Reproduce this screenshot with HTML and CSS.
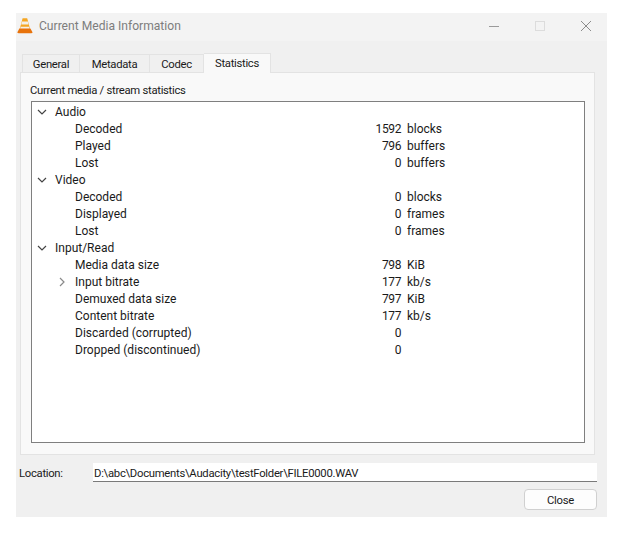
FILE: index.html
```html
<!DOCTYPE html>
<html lang="en">
<head>
<meta charset="UTF-8">
<meta name="viewport" content="width=device-width, initial-scale=1.0">
<title>Current Media Information</title>
<link rel="stylesheet" href="styles.css">
</head>
<body>
<div class="window">
    <div class="titlebar">
        <svg class="vlc-icon" width="16" height="17" viewBox="0 0 16 17">
            <path d="M5.6 1.2h4.6l3 11.3H2.6z" fill="#f5a623"/>
            <path d="M5 4.6h5.8l.8 3H4.200z" fill="#f4f0e8"/>
            <path d="M3.700 9.800h8.400l.6 2.200H3.100z" fill="#f6f0e6"/>
            <path d="M2.400 11.600h11l2 3.400c.2.800-.2 1.200-1 1.200H1.500c-.8 0-1.200-.4-1-1.200z" fill="#e8730c"/>
        </svg>
        <span class="title">Current Media Information</span>
        <div class="window-buttons">
            <svg width="12" height="12" viewBox="0 0 12 12"><path d="M1 6.500h10" stroke="#9a9a9a" fill="none"/></svg>
            <svg width="12" height="12" viewBox="0 0 12 12"><rect x="1.500" y="1.500" width="9" height="9" stroke="#dcdcdc" fill="none"/></svg>
            <svg width="12" height="12" viewBox="0 0 12 12"><path d="M1 1l10 10M11 1L1 11" stroke="#8c8c8c" fill="none"/></svg>
        </div>
    </div>

    <div class="tabs">
        <div class="tab">General</div>
        <div class="tab">Metadata</div>
        <div class="tab">Codec</div>
        <div class="tab active">Statistics</div>
    </div>

    <div class="panel">
        <div class="panel-label">Current media / stream statistics</div>
        <div class="tree">
            <div class="row"><svg class="arrow" viewBox="0 0 10 10"><path d="M1 3l4 4 4-4" /></svg><span class="group">Audio</span></div>
            <div class="row"><span class="name">Decoded</span><span class="value">1592</span><span class="unit">blocks</span></div>
            <div class="row"><span class="name">Played</span><span class="value">796</span><span class="unit">buffers</span></div>
            <div class="row"><span class="name">Lost</span><span class="value">0</span><span class="unit">buffers</span></div>

            <div class="row"><svg class="arrow" viewBox="0 0 10 10"><path d="M1 3l4 4 4-4" /></svg><span class="group">Video</span></div>
            <div class="row"><span class="name">Decoded</span><span class="value">0</span><span class="unit">blocks</span></div>
            <div class="row"><span class="name">Displayed</span><span class="value">0</span><span class="unit">frames</span></div>
            <div class="row"><span class="name">Lost</span><span class="value">0</span><span class="unit">frames</span></div>

            <div class="row"><svg class="arrow" viewBox="0 0 10 10"><path d="M1 3l4 4 4-4" /></svg><span class="group">Input/Read</span></div>
            <div class="row"><span class="name">Media data size</span><span class="value">798</span><span class="unit">KiB</span></div>
            <div class="row"><svg class="arrow sub" viewBox="0 0 10 10"><path d="M3 1l4 4-4 4" /></svg><span class="name">Input bitrate</span><span class="value">177</span><span class="unit">kb/s</span></div>
            <div class="row"><span class="name">Demuxed data size</span><span class="value">797</span><span class="unit">KiB</span></div>
            <div class="row"><span class="name">Content bitrate</span><span class="value">177</span><span class="unit">kb/s</span></div>
            <div class="row"><span class="name">Discarded (corrupted)</span><span class="value">0</span><span class="unit"></span></div>
            <div class="row"><span class="name">Dropped (discontinued)</span><span class="value">0</span><span class="unit"></span></div>
        </div>
    </div>

    <div class="location">
        <label for="path">Location:</label>
        <input type="text" id="path" value="D:\abc\Documents\Audacity\testFolder\FILE0000.WAV" readonly>
    </div>

    <div class="footer">
        <button>Close</button>
    </div>
</div>
</body>
</html>
```

FILE: styles.css
```css
body {
    font-family: Roboto, "Open Sans", sans-serif;
    font-size: 11.300px;
    letter-spacing: -0.3px;
    color: #1a1a1a;
    margin: 0;
    background-color: #fff;
}

.window {
    width: 591px;
    height: 504px;
    margin: 13px 0 0 16px;
    background-color: #f0f0f0;
    display: flex;
    flex-direction: column;
}

.titlebar {
    height: 28px;
    box-sizing: border-box;
    padding-bottom: 3px;
    background-color: #f3f3f3;
    display: flex;
    align-items: center;
    padding-left: 1px;
}

.vlc-icon {
    margin-right: 6px;
}

.title {
    color: #7d7d7d;
    font-size: 12.100px;
    letter-spacing: 0;
}

.window-buttons {
    margin-left: auto;
    display: flex;
    gap: 34px;
    margin-right: 15px;
}

.tabs {
    display: flex;
    margin: 12px 0 0 6px;
    height: 19px;
    align-items: flex-end;
}

.tab {
    height: 18px;
    line-height: 20px;
    text-align: center;
    background-color: #f0f0f0;
    border: 1px solid #e3e3e3;
    border-left: none;
    border-bottom: none;
    box-sizing: border-box;
}

.tab:nth-child(1) {
    width: 58px;
    border-left: 1px solid #e3e3e3;
}

.tab:nth-child(2) {
    width: 70px;
}

.tab:nth-child(3) {
    width: 54px;
}

.tab.active {
    width: 67px;
    height: 20px;
    line-height: 20px;
    background-color: #f9f9f9;
    margin-bottom: -1px;
    position: relative;
}

.panel {
    margin: 0 12px 0 4px;
    height: 383px;
    background-color: #f9f9f9;
    border: 1px solid #e3e3e3;
    box-sizing: border-box;
    padding: 8px 9px 11px 9px;
    display: flex;
    flex-direction: column;
}

.panel-label {
    height: 20px;
    line-height: 20px;
}

.tree {
    flex: 1;
    margin-left: 1px;
    background-color: #fff;
    border: 1px solid #7f7f7f;
    padding: 2px 0 0 0;
    font-size: 12px;
    letter-spacing: 0;
}

.row {
    height: 17px;
    line-height: 17px;
    display: flex;
    align-items: center;
    padding-left: 43px;
    position: relative;
}

.row:has(.group) {
    padding-left: 23px;
}

.arrow {
    position: absolute;
    left: 5px;
    top: 3px;
    width: 10px;
    height: 10px;
    fill: none;
    stroke: #444;
    stroke-width: 1.2;
}

.arrow.sub {
    left: 25px;
    stroke: #8a8a8a;
}

.name {
    width: 296px;
}

.value {
    width: 30px;
    text-align: right;
    letter-spacing: -0.4px;
}

.unit {
    margin-left: 6px;
}

.location {
    display: flex;
    align-items: center;
    margin: 8px 10px 0 3px;
    height: 19px;
}

.location label {
    width: 74px;
    padding-top: 2px;
}

.location input {
    flex: 1;
    height: 19px;
    box-sizing: border-box;
    border: none;
    border-bottom: 1px solid #7a7a7a;
    background-color: #fff;
    font-family: inherit;
    font-size: 11.300px;
    letter-spacing: -0.28px;
    color: #1a1a1a;
    padding: 2px 0 0 1px;
    outline: none;
}

.footer {
    display: flex;
    justify-content: flex-end;
    margin: 7px 10px 0 0;
}

button {
    width: 73px;
    height: 21px;
    padding: 1px 0 0;
    background-color: #fdfdfd;
    border: 1px solid #d0d0d0;
    border-radius: 4px;
    font-family: inherit;
    font-size: 11.300px;
    letter-spacing: -0.3px;
    color: #1a1a1a;
}
```
